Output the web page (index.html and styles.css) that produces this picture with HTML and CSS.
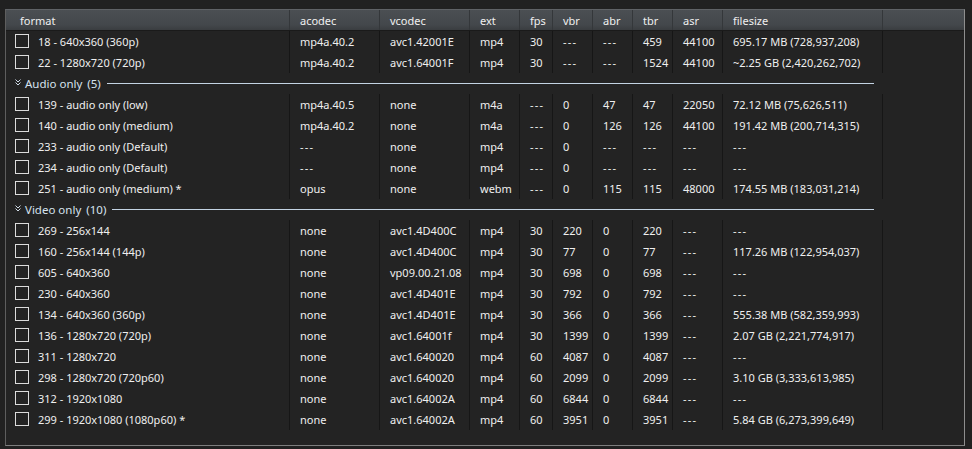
FILE: index.html
```html
<!DOCTYPE html>
<html>
<head>
<meta charset="utf-8">
<link rel="stylesheet" href="styles.css">
</head>
<body>
<div class="frame">
  <div class="head">
    <div class="hc first">format</div>
    <div class="hc">acodec</div>
    <div class="hc">vcodec</div>
    <div class="hc">ext</div>
    <div class="hc">fps</div>
    <div class="hc">vbr</div>
    <div class="hc">abr</div>
    <div class="hc">tbr</div>
    <div class="hc">asr</div>
    <div class="hc">filesize</div>
  </div>
  <div class="rows">
    <div class="row"><div class="c f"><span class="cb"></span>18 - 640x360 (360p)</div><div class="c">mp4a.40.2</div><div class="c">avc1.42001E</div><div class="c">mp4</div><div class="c">30</div><div class="c na">---</div><div class="c na">---</div><div class="c">459</div><div class="c">44100</div><div class="c">695.17 MB (728,937,208)</div></div>
    <div class="row"><div class="c f"><span class="cb"></span>22 - 1280x720 (720p)</div><div class="c">mp4a.40.2</div><div class="c">avc1.64001F</div><div class="c">mp4</div><div class="c">30</div><div class="c na">---</div><div class="c na">---</div><div class="c">1524</div><div class="c">44100</div><div class="c">~2.25 GB (2,420,262,702)</div></div>

    <div class="group"><svg class="chev" width="6" height="7" viewBox="0 0 6 7"><polyline points="0.5,0.5 3,3 5.5,0.5"/><polyline points="0.5,3.5 3,6 5.5,3.5"/></svg><span class="gname">Audio only</span><span class="gcount">(5)</span><span class="gline"></span></div>

    <div class="row"><div class="c f"><span class="cb"></span>139 - audio only (low)</div><div class="c">mp4a.40.5</div><div class="c">none</div><div class="c">m4a</div><div class="c na">---</div><div class="c">0</div><div class="c">47</div><div class="c">47</div><div class="c">22050</div><div class="c">72.12 MB (75,626,511)</div></div>
    <div class="row"><div class="c f"><span class="cb"></span>140 - audio only (medium)</div><div class="c">mp4a.40.2</div><div class="c">none</div><div class="c">m4a</div><div class="c na">---</div><div class="c">0</div><div class="c">126</div><div class="c">126</div><div class="c">44100</div><div class="c">191.42 MB (200,714,315)</div></div>
    <div class="row"><div class="c f"><span class="cb"></span>233 - audio only (Default)</div><div class="c na">---</div><div class="c">none</div><div class="c">mp4</div><div class="c na">---</div><div class="c">0</div><div class="c na">---</div><div class="c na">---</div><div class="c na">---</div><div class="c na">---</div></div>
    <div class="row"><div class="c f"><span class="cb"></span>234 - audio only (Default)</div><div class="c na">---</div><div class="c">none</div><div class="c">mp4</div><div class="c na">---</div><div class="c">0</div><div class="c na">---</div><div class="c na">---</div><div class="c na">---</div><div class="c na">---</div></div>
    <div class="row"><div class="c f"><span class="cb"></span>251 - audio only (medium) *</div><div class="c">opus</div><div class="c">none</div><div class="c">webm</div><div class="c na">---</div><div class="c">0</div><div class="c">115</div><div class="c">115</div><div class="c">48000</div><div class="c">174.55 MB (183,031,214)</div></div>

    <div class="group"><svg class="chev" width="6" height="7" viewBox="0 0 6 7"><polyline points="0.5,0.5 3,3 5.5,0.5"/><polyline points="0.5,3.5 3,6 5.5,3.5"/></svg><span class="gname">Video only</span><span class="gcount">(10)</span><span class="gline"></span></div>

    <div class="row"><div class="c f"><span class="cb"></span>269 - 256x144</div><div class="c">none</div><div class="c">avc1.4D400C</div><div class="c">mp4</div><div class="c">30</div><div class="c">220</div><div class="c">0</div><div class="c">220</div><div class="c na">---</div><div class="c na">---</div></div>
    <div class="row"><div class="c f"><span class="cb"></span>160 - 256x144 (144p)</div><div class="c">none</div><div class="c">avc1.4D400C</div><div class="c">mp4</div><div class="c">30</div><div class="c">77</div><div class="c">0</div><div class="c">77</div><div class="c na">---</div><div class="c">117.26 MB (122,954,037)</div></div>
    <div class="row"><div class="c f"><span class="cb"></span>605 - 640x360</div><div class="c">none</div><div class="c">vp09.00.21.08</div><div class="c">mp4</div><div class="c">30</div><div class="c">698</div><div class="c">0</div><div class="c">698</div><div class="c na">---</div><div class="c na">---</div></div>
    <div class="row"><div class="c f"><span class="cb"></span>230 - 640x360</div><div class="c">none</div><div class="c">avc1.4D401E</div><div class="c">mp4</div><div class="c">30</div><div class="c">792</div><div class="c">0</div><div class="c">792</div><div class="c na">---</div><div class="c na">---</div></div>
    <div class="row"><div class="c f"><span class="cb"></span>134 - 640x360 (360p)</div><div class="c">none</div><div class="c">avc1.4D401E</div><div class="c">mp4</div><div class="c">30</div><div class="c">366</div><div class="c">0</div><div class="c">366</div><div class="c na">---</div><div class="c">555.38 MB (582,359,993)</div></div>
    <div class="row"><div class="c f"><span class="cb"></span>136 - 1280x720 (720p)</div><div class="c">none</div><div class="c">avc1.64001f</div><div class="c">mp4</div><div class="c">30</div><div class="c">1399</div><div class="c">0</div><div class="c">1399</div><div class="c na">---</div><div class="c">2.07 GB (2,221,774,917)</div></div>
    <div class="row"><div class="c f"><span class="cb"></span>311 - 1280x720</div><div class="c">none</div><div class="c">avc1.640020</div><div class="c">mp4</div><div class="c">60</div><div class="c">4087</div><div class="c">0</div><div class="c">4087</div><div class="c na">---</div><div class="c na">---</div></div>
    <div class="row"><div class="c f"><span class="cb"></span>298 - 1280x720 (720p60)</div><div class="c">none</div><div class="c">avc1.640020</div><div class="c">mp4</div><div class="c">60</div><div class="c">2099</div><div class="c">0</div><div class="c">2099</div><div class="c na">---</div><div class="c">3.10 GB (3,333,613,985)</div></div>
    <div class="row"><div class="c f"><span class="cb"></span>312 - 1920x1080</div><div class="c">none</div><div class="c">avc1.64002A</div><div class="c">mp4</div><div class="c">60</div><div class="c">6844</div><div class="c">0</div><div class="c">6844</div><div class="c na">---</div><div class="c na">---</div></div>
    <div class="row"><div class="c f"><span class="cb"></span>299 - 1920x1080 (1080p60) *</div><div class="c">none</div><div class="c">avc1.64002A</div><div class="c">mp4</div><div class="c">60</div><div class="c">3951</div><div class="c">0</div><div class="c">3951</div><div class="c na">---</div><div class="c">5.84 GB (6,273,399,649)</div></div>
  </div>
</div>
</body>
</html>
```

FILE: styles.css
```css
* { box-sizing: border-box; }
html, body { margin: 0; padding: 0; }
body {
  background: #212121;
  font-family: "Noto Sans", "Open Sans", sans-serif;
  font-size: 11px;
  color: #efefef;
  width: 972px;
  height: 449px;
  overflow: hidden;
}
.frame {
  margin: 9px 0 0 5px;
  width: 960px;
  height: 437px;
  border: 1px solid;
  border-color: #5f6266 #8e8e8e #7e7e7e #5e5e5e;
  background: #232323;
}
.head {
  display: grid;
  grid-template-columns: 284px 90px 90px 50px 33px 40px 40px 40px 50px 160px 1fr;
  height: 21px;
  background: linear-gradient(#4b4f53, #43474b 75%, #3a3d40);
  border-bottom: 1px solid #1a1a1a;
}
.head::after { content: ""; }
.hc {
  display: flex;
  align-items: center;
  padding-left: 10px;
  border-right: 1px solid #34373a;
  color: #f0f0f0;
  white-space: nowrap;
}
.hc.first { padding-left: 14px; }
.row {
  display: grid;
  grid-template-columns: 284px 90px 90px 50px 33px 40px 40px 40px 50px 160px;
  height: 21px;
}
.c {
  display: flex;
  align-items: center;
  padding-left: 10px;
  border-right: 1px solid #161616;
  white-space: nowrap;
  overflow: hidden;
}
.c.na { letter-spacing: 1.2px; }
.c.f { padding-left: 9px; }
.cb {
  width: 14px;
  height: 14px;
  border: 1px solid #dcdcdc;
  margin-right: 9px;
  margin-top: -2px;
  flex: none;
}
.group {
  display: flex;
  align-items: center;
  height: 21px;
  padding-left: 9px;
  color: #d6e2ee;
  font-size: 11.5px;
}
.chev {
  fill: none;
  stroke: #d0dce8;
  stroke-width: 1;
  margin-right: 4px;
  margin-top: -2px;
}
.gcount { margin-left: 5px; }
.gline {
  flex: 1;
  height: 1px;
  background: #c3d3e3;
  margin-left: 6px;
  margin-right: 90px;
  margin-top: -1px;
}
```
